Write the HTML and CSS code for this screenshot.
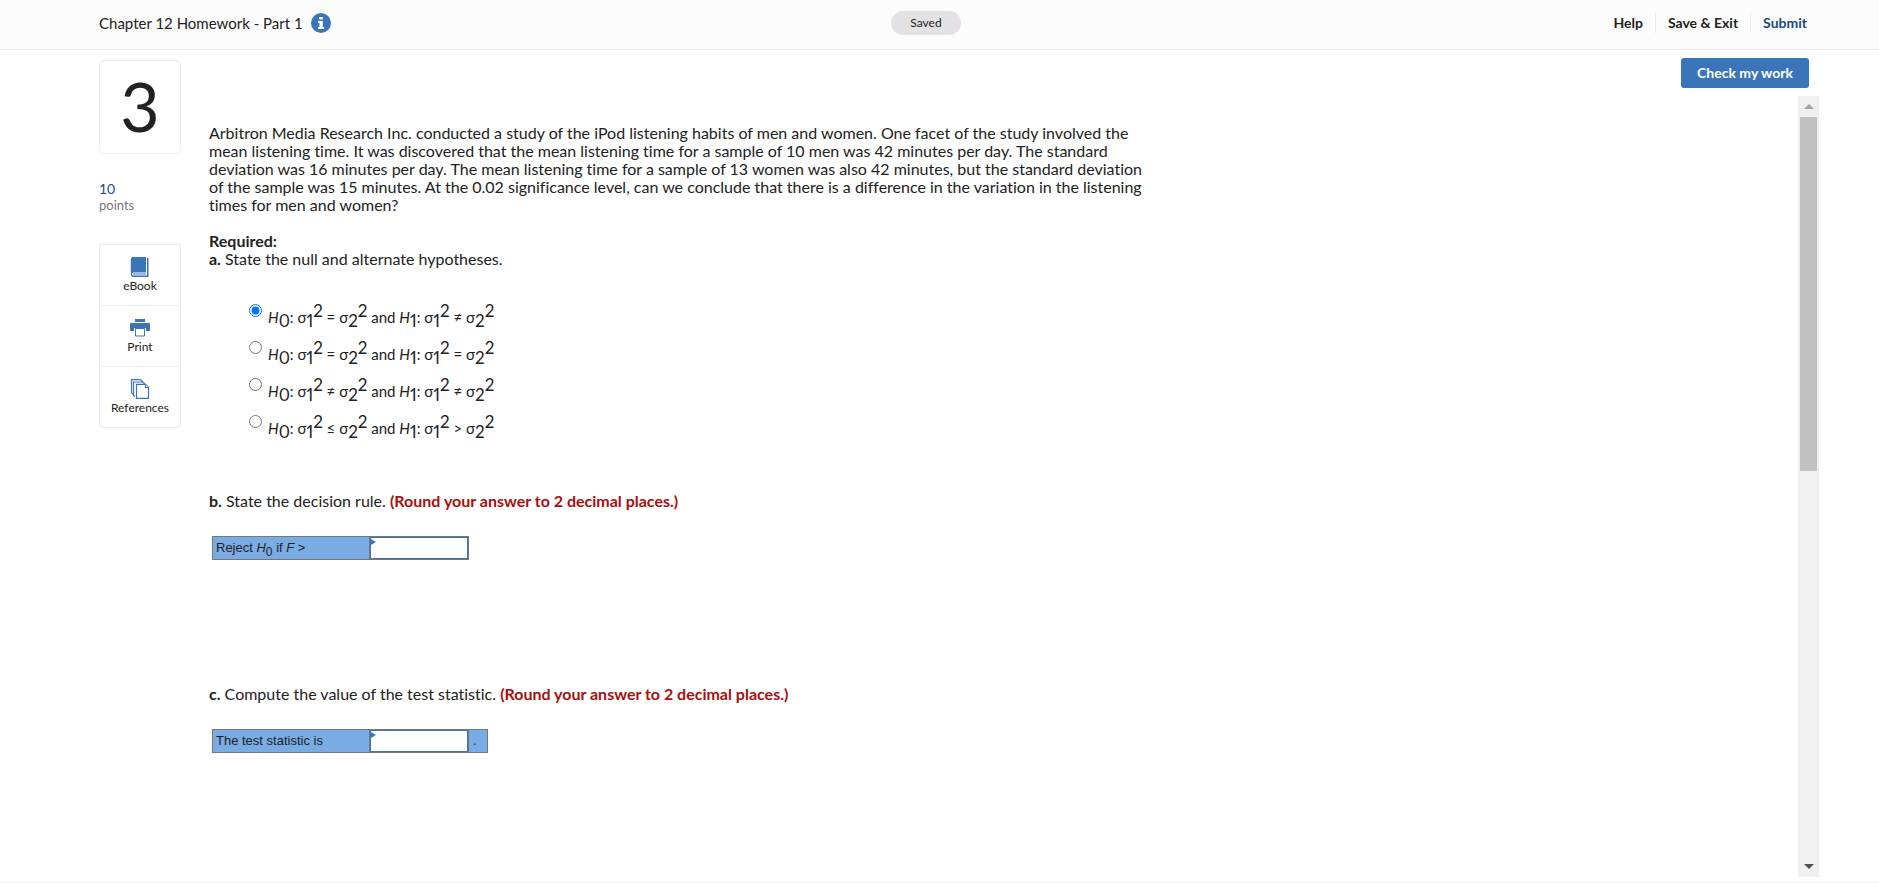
FILE: index.html
```html
<!DOCTYPE html>
<html lang="en">

<head>
  <meta charset="utf-8">
  <title>Chapter 12 Homework - Part 1</title>
  <meta name="viewport" content="width=device-width, initial-scale=1">
  <link rel="stylesheet" href="styles.css">
</head>

<body>

  <header class="topbar">
    <h1 class="title">Chapter 12 Homework - Part 1
      <svg class="info" viewBox="0 0 20 20" role="img" aria-label="Info">
        <circle cx="10" cy="10" r="10" fill="#3a75ba"/>
        <path d="M8.2 4h3.6v2.6H8.2zM7 8h4.8v6H13.200v2H7v-2h1.400v-4H7z" fill="#fff"/>
      </svg>
    </h1>
    <span class="saved">Saved</span>
    <nav class="menu">
      <a href="#help">Help</a>
      <a href="#exit">Save &amp; Exit</a>
      <a href="#submit" class="submit">Submit</a>
    </nav>
  </header>

  <div class="page">
    <aside class="side">
      <div class="number">3</div>
      <div class="points"><span class="value">10</span>points</div>
      <div class="tools">
        <button type="button">
          <svg width="20" height="20" viewBox="0 0 20 20">
            <path d="M3 0h13v15.500H3.500C2.500 15.500 2 16.300 2 17s.5 1.500 1.500 1.500H17V1h1.500v19H3.500C1.800 20 .8 18.800.8 17V2.500C.8 1 1.800 0 3 0z" fill="#3a75ba"/>
            <path d="M3 17h13" stroke="#3a75ba"/>
          </svg>
          eBook
        </button>
        <button type="button">
          <svg width="20" height="20" viewBox="0 0 20 20">
            <path d="M5 1h10v3H5zM1.500 5h17c1 0 1.500.7 1.500 1.500V13h-4V10H4v3H0V6.500C0 5.700.5 5 1.500 5z" fill="#3a75ba"/>
            <path d="M5.500 10.500h9v7.500h-9z" fill="#fff" stroke="#3a75ba"/>
          </svg>
          Print
        </button>
        <button type="button">
          <svg width="20" height="20" viewBox="0 0 20 20" fill="#fff" stroke="#3a75ba" stroke-width="1.200">
            <path d="M3 15L1.500 14V.6h9L13 3"/>
            <path d="M5 17.500L3.500 16.500V3h9L15 5"/>
            <path d="M6.500 5.300h9l3 3v11h-12z"/>
            <path d="M15.500 5.300v3h3"/>
          </svg>
          References
        </button>
      </div>
    </aside>

    <main class="main">
      <div class="actions">
        <button type="button" class="check">Check my work</button>
      </div>
      <div class="pane">
        <div class="question">
          <p>
            Arbitron Media Research Inc. conducted a study of the iPod listening habits of men and women. One facet of the study involved the<br>
            mean listening time. It was discovered that the mean listening time for a sample of 10 men was 42 minutes per day. The standard<br>
            deviation was 16 minutes per day. The mean listening time for a sample of 13 women was also 42 minutes, but the standard deviation<br>
            of the sample was 15 minutes. At the 0.02 significance level, can we conclude that there is a difference in the variation in the listening<br>
            times for men and women?
          </p>
          <p><b>Required:</b><br><b>a.</b> State the null and alternate hypotheses.</p>

          <div class="choices">
            <label><input type="radio" name="hypotheses" checked>
              <span><i>H</i><sub>0</sub>: σ<sub>1</sub><sup>2</sup> = σ<sub>2</sub><sup>2</sup> and <i>H</i><sub>1</sub>: σ<sub>1</sub><sup>2</sup> ≠ σ<sub>2</sub><sup>2</sup></span></label>
            <label><input type="radio" name="hypotheses">
              <span><i>H</i><sub>0</sub>: σ<sub>1</sub><sup>2</sup> = σ<sub>2</sub><sup>2</sup> and <i>H</i><sub>1</sub>: σ<sub>1</sub><sup>2</sup> = σ<sub>2</sub><sup>2</sup></span></label>
            <label><input type="radio" name="hypotheses">
              <span><i>H</i><sub>0</sub>: σ<sub>1</sub><sup>2</sup> ≠ σ<sub>2</sub><sup>2</sup> and <i>H</i><sub>1</sub>: σ<sub>1</sub><sup>2</sup> ≠ σ<sub>2</sub><sup>2</sup></span></label>
            <label><input type="radio" name="hypotheses">
              <span><i>H</i><sub>0</sub>: σ<sub>1</sub><sup>2</sup> ≤ σ<sub>2</sub><sup>2</sup> and <i>H</i><sub>1</sub>: σ<sub>1</sub><sup>2</sup> &gt; σ<sub>2</sub><sup>2</sup></span></label>
          </div>

          <p><b>b.</b> State the decision rule. <b class="note">(Round your answer to 2 decimal places.)</b></p>
          <table class="answer">
            <tr>
              <th scope="row"><label for="reject">Reject <i>H</i><sub>0</sub> if <i>F</i> &gt;</label></th>
              <td class="entry"><input type="text" id="reject"></td>
            </tr>
          </table>

          <p class="part-c"><b>c.</b> Compute the value of the test statistic. <b class="note">(Round your answer to 2 decimal places.)</b></p>
          <table class="answer">
            <tr>
              <th scope="row"><label for="statistic">The test statistic is</label></th>
              <td class="entry"><input type="text" id="statistic"></td>
              <td class="tail">.</td>
            </tr>
          </table>
        </div>

        <div class="scrollbar" aria-hidden="true">
          <span class="arrow up"></span>
          <span class="thumb"></span>
          <span class="arrow down"></span>
        </div>
      </div>
    </main>
  </div>

</body>

</html>
```

FILE: styles.css
```css
* {
  box-sizing: border-box;
}

body {
  margin: 0;
  min-height: 100vh;
  display: flex;
  flex-direction: column;
  font-family: Lato, "Open Sans", sans-serif;
  font-size: 16px;
  font-variant-ligatures: none;
  line-height: 18px;
  color: #222;
  background-color: #fff;
  border-bottom: 1px solid #f0f0f0;
}

button {
  font: inherit;
  color: inherit;
  border: 0;
  cursor: pointer;
}

.topbar {
  display: grid;
  grid-template-columns: 12fr auto 13fr;
  align-items: center;
  height: 50px;
  padding: 0 60px 4px 99px;
  background-color: #fcfcfc;
  border-bottom: 1px solid #ececec;
}

.title {
  display: flex;
  align-items: center;
  gap: 8px;
  margin: 0;
  font-size: 15px;
  font-weight: 400;
}

.info {
  width: 20px;
  height: 20px;
}

.saved {
  width: 70px;
  border-radius: 12px;
  background-color: #e3e1e4;
  font-size: 12px;
  line-height: 24px;
  text-align: center;
}

.menu {
  display: flex;
  justify-content: flex-end;
}

.menu a {
  padding: 0 12px;
  font-size: 14px;
  line-height: 20px;
  font-weight: 700;
  color: #222;
  text-decoration: none;
}

.menu a + a {
  border-left: 1px solid #ececec;
}

.menu .submit {
  color: #194a87;
}

.page {
  flex: 1;
  display: flex;
  gap: 28px;
  padding: 0 60px 5px 99px;
}

.side {
  flex: none;
  width: 82px;
  padding-top: 10px;
}

.number {
  height: 94px;
  border: 1px solid #ececec;
  border-radius: 5px;
  font-size: 68px;
  line-height: 90px;
  text-align: center;
}

.points {
  margin-top: 27px;
  font-size: 13px;
  line-height: 16px;
  color: #777;
}

.points .value {
  display: block;
  font-size: 14px;
  color: #194a87;
}

.tools {
  margin-top: 31px;
  border: 1px solid #ececec;
  border-bottom: 0;
  border-radius: 0 0 5px 5px;
}

.tools button {
  display: flex;
  flex-direction: column;
  align-items: center;
  width: 100%;
  height: 61px;
  padding: 12px 0 0;
  border-bottom: 1px solid #ececec;
  background: none;
  font-size: 12px;
}

.tools button:last-child {
  border-radius: 0 0 5px 5px;
}

.main {
  flex: 1;
  display: flex;
  flex-direction: column;
}

.actions {
  display: flex;
  justify-content: flex-end;
  padding: 8px 10px;
}

.check {
  width: 128px;
  height: 30px;
  border-radius: 3px;
  background-color: #3a75ba;
  font-size: 14px;
  font-weight: 700;
  color: #fff;
}

.pane {
  flex: 1;
  display: flex;
}

.question {
  flex: 1;
  padding-top: 28px;
}

.question p {
  margin: 0 0 18px;
}

.note {
  color: #a90e0e;
}

.choices {
  display: flex;
  flex-direction: column;
  margin: 32px 0 44px 40px;
}

.choices label {
  display: flex;
  align-items: flex-start;
  gap: 6px;
  height: 37px;
}

.choices input {
  width: 13px;
  height: 13px;
  margin: 4px 0 0;
}

.choices span {
  padding-top: 8px;
  font-size: 15px;
  font-variant-numeric: proportional-nums;
  white-space: nowrap;
}

.choices sub,
.choices sup {
  font-size: 17px;
  line-height: 0;
}

.answer {
  margin: 26px 0 0 3px;
  border-collapse: collapse;
  font-family: "Liberation Sans", Arial, sans-serif;
  font-size: 13px;
  line-height: 16px;
}

.answer th,
.answer td {
  height: 23px;
  padding: 0;
  border: 1px solid #777;
  background-color: #79ace5;
}

.answer th {
  width: 157px;
  padding-left: 3px;
  font-weight: 400;
  text-align: left;
}

.answer sub {
  font-size: 12px;
  line-height: 0;
}

/* small blue flag in the corner of every answer box */
.answer .entry {
  position: relative;
  width: 99px;
}

.entry::before {
  content: "";
  position: absolute;
  top: 2px;
  left: 1px;
  border: solid transparent;
  border-width: 3px 0 3px 5px;
  border-left-color: #3a75ba;
}

.entry input {
  display: block;
  width: 100%;
  height: 22px;
  padding: 0 6px;
  border: 1px solid #3a75ba;
  background-color: #fff;
  font: inherit;
}

.answer .tail {
  width: 19px;
  padding-left: 4px;
}

.question .part-c {
  margin-top: 125px;
}

.scrollbar {
  display: flex;
  flex-direction: column;
  width: 21px;
  padding: 0 2px;
  background-color: #f0f0f0;
}

.thumb {
  height: 354px;
  background-color: #c1c1c1;
}

.arrow {
  display: flex;
  justify-content: center;
  align-items: center;
  height: 21px;
}

.arrow::before {
  content: "";
  border: solid transparent;
  border-width: 0 5px;
}

.up::before {
  border-bottom: 5px solid #a3a3a3;
}

.down {
  margin-top: auto;
}

.down::before {
  border-top: 5px solid #505050;
}
```
